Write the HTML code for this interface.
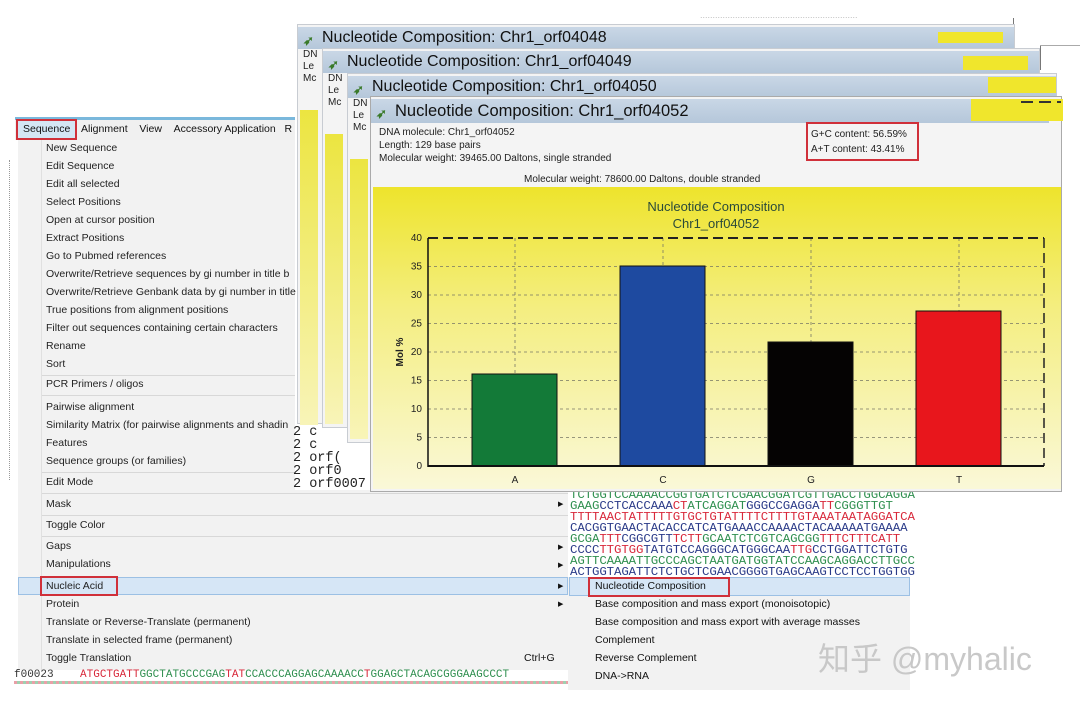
<!DOCTYPE html>
<html><head><meta charset="utf-8"><style>
*{margin:0;padding:0;box-sizing:border-box}
body{width:1080px;height:703px;background:#fff;position:relative;overflow:hidden;font-family:"Liberation Sans",sans-serif;color:#111}
.a{position:absolute}
.mi{position:absolute;left:46px;font-size:10.5px;color:#222;white-space:nowrap}
.win{position:absolute;background:#f4f4f4;border:1px solid #c8ccd2}
.tb{position:absolute;left:0;right:0;background:linear-gradient(#c9d7e6,#b5c7da);font-size:16px;color:#111;white-space:nowrap;padding-left:24px}
.ico{position:absolute;left:5px;top:3px;color:#3a7a2a;font-size:13px;font-weight:bold}
.sm{font-size:10px;color:#222;position:absolute;white-space:nowrap}
.seq{position:absolute;left:570px;font-family:"Liberation Mono",monospace;font-size:12.4px;line-height:11px;white-space:nowrap;letter-spacing:-0.1px}
.g{color:#2f8f4f}.r{color:#d8283a}.b{color:#2a3a88}
.sep{position:absolute;height:1px;background:#d8d8d8}
</style></head><body>

<div class="a" style="left:700px;top:10px;width:370px;height:8px;color:#bbb;font-size:9px;overflow:hidden;white-space:nowrap">...............................................................</div>
<div class="a" style="left:1013px;top:18px;width:1px;height:25px;background:#777"></div>
<div class="a" style="left:1040px;top:45px;width:1px;height:25px;background:#777"></div>
<div class="a" style="left:1040px;top:45px;width:40px;height:1px;background:#aaa"></div>

<!-- left menubar -->
<div class="a" style="left:15px;top:117px;width:280px;height:3px;background:#7ab8dc"></div>
<div class="a" style="left:15px;top:120px;width:280px;height:20px;background:#f0f0f0"></div>
<div class="a" style="left:16px;top:119px;width:61px;height:21px;border:2px solid #d0303a;background:#d4e6f4"></div>
<div class="a" style="left:23px;top:123px;font-size:10.5px">Sequence</div>
<div class="a" style="left:81px;top:123px;font-size:10.5px;white-space:nowrap">Alignment&nbsp;&nbsp;&nbsp;&nbsp;View&nbsp;&nbsp;&nbsp;&nbsp;Accessory Application&nbsp;&nbsp;&nbsp;R</div>
<div class="a" style="left:0;top:160px;width:10px;height:320px;border-right:1px dotted #999"></div>
<div class="a" style="left:18px;top:140px;width:277px;height:350px;background:#f2f2f2"></div>
<div class="a" style="left:41px;top:140px;width:1px;height:350px;background:#e0e0e0"></div>
<div class="mi" style="top:142px">New Sequence</div>
<div class="mi" style="top:160px">Edit Sequence</div>
<div class="mi" style="top:178px">Edit all selected</div>
<div class="mi" style="top:196px">Select Positions</div>
<div class="mi" style="top:214px">Open at cursor position</div>
<div class="mi" style="top:232px">Extract Positions</div>
<div class="mi" style="top:250px">Go to Pubmed references</div>
<div class="mi" style="top:268px;width:250px;overflow:hidden">Overwrite/Retrieve sequences by gi number in title b</div>
<div class="mi" style="top:286px;width:250px;overflow:hidden">Overwrite/Retrieve Genbank data by gi number in title</div>
<div class="mi" style="top:304px">True positions from alignment positions</div>
<div class="mi" style="top:322px">Filter out sequences containing certain characters</div>
<div class="mi" style="top:340px">Rename</div>
<div class="mi" style="top:358px">Sort</div>
<div class="sep" style="left:42px;top:375px;width:253px"></div>
<div class="mi" style="top:378px">PCR Primers / oligos</div>
<div class="sep" style="left:42px;top:395px;width:253px"></div>
<div class="mi" style="top:401px">Pairwise alignment</div>
<div class="mi" style="top:419px;width:250px;overflow:hidden">Similarity Matrix (for pairwise alignments and shadin</div>
<div class="mi" style="top:437px">Features</div>
<div class="mi" style="top:455px">Sequence groups (or families)</div>
<div class="sep" style="left:42px;top:472px;width:253px"></div>
<div class="mi" style="top:476px">Edit Mode</div>

<div class="a" style="left:18px;top:490px;width:550px;height:180px;background:#f2f2f2"></div>
<div class="a" style="left:41px;top:490px;width:1px;height:180px;background:#e0e0e0"></div>
<div class="sep" style="left:42px;top:493px;width:526px"></div>
<div class="mi" style="top:498px">Mask</div><div class="a" style="left:558px;top:500px;font-size:7px">▶</div>
<div class="sep" style="left:42px;top:515px;width:526px"></div>
<div class="mi" style="top:519px">Toggle Color</div>
<div class="sep" style="left:42px;top:536px;width:526px"></div>
<div class="mi" style="top:540px">Gaps</div><div class="a" style="left:558px;top:543px;font-size:7px">▶</div>
<div class="mi" style="top:558px">Manipulations</div><div class="a" style="left:558px;top:561px;font-size:7px">▶</div>
<div class="a" style="left:18px;top:577px;width:550px;height:18px;background:#d6e6f6;border:1px solid #9cc0e4"></div>
<div class="a" style="left:40px;top:576px;width:78px;height:20px;border:2px solid #d0303a"></div>
<div class="mi" style="top:580px">Nucleic Acid</div><div class="a" style="left:558px;top:582px;font-size:7px">▶</div>
<div class="mi" style="top:598px">Protein</div><div class="a" style="left:558px;top:600px;font-size:7px">▶</div>
<div class="mi" style="top:616px">Translate or Reverse-Translate (permanent)</div>
<div class="mi" style="top:634px">Translate in selected frame (permanent)</div>
<div class="mi" style="top:652px">Toggle Translation</div>
<div class="a" style="left:524px;top:652px;font-size:10.5px">Ctrl+G</div>
<div class="a" style="left:14px;top:669px;font-family:'Liberation Mono',monospace;font-size:11px;color:#333;white-space:nowrap">f00023&nbsp;&nbsp;&nbsp;&nbsp;<span class="r">ATGCTGATT</span><span class="g">GGCTATGCCCGAG</span><span class="r">TAT</span><span class="g">CCACCCAGGAGCAAAACC</span><span class="r">T</span><span class="g">GGAGCTACAGCGGGAAGCCCT</span></div>
<div class="a" style="left:14px;top:681px;width:555px;height:3px;background:repeating-linear-gradient(90deg,#e9a0a8 0 3px,#9fd0b0 3px 6px)"></div>

<!-- seq text column -->
<div class="a" style="left:293px;top:426px;font-family:'Liberation Mono',monospace;font-size:13.5px;line-height:13px;color:#222;white-space:pre">2 c
2 c
2 orf(
2 orf0
2 orf0007</div>

<div class="seq" style="top:490px">
<span class="g">TCTGGTCCAAAACCGGTGATCTCGAACGGATCGTTGACCTGGCAGGA</span><br>
<span class="g">GAAG</span><span class="b">CCTCACCAAA</span><span class="r">CT</span><span class="g">ATCAGGAT</span><span class="b">GGGCCGAGGA</span><span class="r">TT</span><span class="g">CGGGTTGT</span><br>
<span class="r">TTTTAACTATTTTTGTGCTGTATTTTCTTTTGTAAATAATAGGATCA</span><br>
<span class="b">CACGGTGAACTACACCATCATGAAACCAAAACTACAAAAATGAAAA</span><br>
<span class="g">GCGA</span><span class="r">TTT</span><span class="b">CGGCGTT</span><span class="r">TCTT</span><span class="g">GCAATCTCGTCAGCGG</span><span class="r">TTTCTTTCATT</span><br>
<span class="b">CCCC</span><span class="r">TTGTGG</span><span class="b">TATGTCCAGGGCATGGGCAA</span><span class="r">TTG</span><span class="b">CCTGGATTCTGTG</span><br>
<span class="g">AGTTCAAAATTGCCCAGCTAATGATGGTATCCAAGCAGGACCTTGCC</span><br>
<span class="b">ACTGGTAGATTCTCTGCTCGAACGGGGTGAGCAAGTCCTCCTGGTGG</span></div>

<!-- submenu -->
<div class="a" style="left:568px;top:577px;width:342px;height:113px;background:#f2f2f2"></div>
<div class="a" style="left:569px;top:577px;width:341px;height:19px;background:#d6e6f6;border:1px solid #9cc0e4"></div>
<div class="a" style="left:588px;top:577px;width:142px;height:20px;border:2px solid #d0303a"></div>
<div class="a" style="left:595px;top:580px;font-size:10.5px">Nucleotide Composition</div>
<div class="a" style="left:595px;top:598px;font-size:10.5px">Base composition and mass export (monoisotopic)</div>
<div class="a" style="left:595px;top:616px;font-size:10.5px">Base composition and mass export with average masses</div>
<div class="a" style="left:595px;top:634px;font-size:10.5px">Complement</div>
<div class="a" style="left:595px;top:652px;font-size:10.5px">Reverse Complement</div>
<div class="a" style="left:595px;top:670px;font-size:10.5px">DNA-&gt;RNA</div>

<!-- windows -->
<div class="win" style="left:297px;top:24px;width:718px;height:400px">
<div class="tb" style="top:2px;height:22px;line-height:22px"><span class="ico">➶</span>Nucleotide Composition: Chr1_orf04048</div>
<div class="a" style="left:640px;top:7px;width:65px;height:11px;background:#f0e62c"></div>
<div class="sm" style="left:5px;top:24px;line-height:12px">DN<br>Le<br>Mc</div>
<div class="a" style="left:2px;top:85px;width:18px;height:315px;background:linear-gradient(#ece540,#f8f4b8)"></div>
</div>
<div class="win" style="left:322px;top:48px;width:718px;height:380px">
<div class="tb" style="top:2px;height:22px;line-height:22px"><span class="ico">➶</span>Nucleotide Composition: Chr1_orf04049</div>
<div class="a" style="left:640px;top:7px;width:65px;height:14px;background:#f0e62c"></div>
<div class="sm" style="left:5px;top:24px;line-height:12px">DN<br>Le<br>Mc</div>
<div class="a" style="left:2px;top:85px;width:18px;height:290px;background:linear-gradient(#ece540,#f8f4b8)"></div>
</div>
<div class="win" style="left:347px;top:73px;width:710px;height:370px">
<div class="tb" style="top:2px;height:22px;line-height:22px"><span class="ico">➶</span>Nucleotide Composition: Chr1_orf04050</div>
<div class="a" style="left:640px;top:3px;width:68px;height:16px;background:#f0e62c"></div>
<div class="sm" style="left:5px;top:24px;line-height:12px">DN<br>Le<br>Mc</div>
<div class="a" style="left:2px;top:85px;width:18px;height:280px;background:linear-gradient(#ece540,#f8f4b8)"></div>
</div>

<div class="win" style="left:370px;top:96px;width:692px;height:396px;background:#f4f4f4;border-color:#aaa">
<div class="tb" style="top:2px;height:24px;line-height:24px;right:12px;font-size:16.5px"><span class="ico">➶</span>Nucleotide Composition: Chr1_orf04052</div>
<div class="a" style="left:600px;top:2px;width:92px;height:22px;background:#f0e62c"></div>
<div class="a" style="left:650px;top:4px;width:40px;height:2px;background:repeating-linear-gradient(90deg,#333 0 12px,transparent 12px 18px)"></div>
<div class="sm" style="left:8px;top:29px;line-height:13px;font-size:10px">DNA molecule: Chr1_orf04052<br>Length: 129 base pairs<br>Molecular weight: 39465.00 Daltons, single stranded</div>
<div class="a" style="left:435px;top:25px;width:113px;height:39px;border:2px solid #d0303a"></div>
<div class="sm" style="left:440px;top:30px;line-height:15px">G+C content: 56.59%<br>A+T content: 43.41%</div>
<div class="sm" style="left:153px;top:77px">Molecular weight: 78600.00 Daltons, double stranded</div>
<div class="a" style="left:2px;top:90px;width:688px;height:302px;background:linear-gradient(#eee42c 0%,#f4ee80 40%,#faf8d8 100%)"></div>
</div>

<!-- chart -->
<svg class="a" style="left:372px;top:186px" width="690" height="305">
<text x="344" y="25" text-anchor="middle" font-family="Liberation Sans" font-size="13" fill="#2a4a3a">Nucleotide Composition</text>
<text x="344" y="42" text-anchor="middle" font-family="Liberation Sans" font-size="13" fill="#2a4a3a">Chr1_orf04052</text>
<g stroke="#776" stroke-dasharray="3,3" stroke-width="0.8">
<line x1="56" x2="672" y1="80.5" y2="80.5"/><line x1="56" x2="672" y1="109" y2="109"/><line x1="56" x2="672" y1="137.5" y2="137.5"/><line x1="56" x2="672" y1="166" y2="166"/><line x1="56" x2="672" y1="194.5" y2="194.5"/><line x1="56" x2="672" y1="223" y2="223"/><line x1="56" x2="672" y1="251.5" y2="251.5"/>
<line x1="143" x2="143" y1="52" y2="280"/><line x1="291" x2="291" y1="52" y2="280"/><line x1="439" x2="439" y1="52" y2="280"/><line x1="587" x2="587" y1="52" y2="280"/>
</g>
<rect x="100" y="188" width="85" height="92" fill="#137a38" stroke="#111"/>
<rect x="248" y="80" width="85" height="200" fill="#1e4aa0" stroke="#111"/>
<rect x="396" y="156" width="85" height="124" fill="#050303" stroke="#111"/>
<rect x="544" y="125" width="85" height="155" fill="#e8161c" stroke="#111"/>
<line x1="56" x2="672" y1="52" y2="52" stroke="#222" stroke-width="2" stroke-dasharray="10,5"/>
<line x1="672" x2="672" y1="52" y2="280" stroke="#222" stroke-width="1.5" stroke-dasharray="10,5"/>
<line x1="56" x2="56" y1="52" y2="281" stroke="#111" stroke-width="1.5"/>
<line x1="56" x2="672" y1="280" y2="280" stroke="#111" stroke-width="2"/>
<g font-family="Liberation Sans" font-size="10" fill="#222" text-anchor="end">
<text x="50" y="55">40</text><text x="50" y="83.5">35</text><text x="50" y="112">30</text><text x="50" y="140.5">25</text><text x="50" y="169">20</text><text x="50" y="197.5">15</text><text x="50" y="226">10</text><text x="50" y="254.5">5</text><text x="50" y="283">0</text>
</g>
<g font-family="Liberation Sans" font-size="10" fill="#222" text-anchor="middle">
<text x="143" y="297">A</text><text x="291" y="297">C</text><text x="439" y="297">G</text><text x="587" y="297">T</text>
</g>
<text transform="translate(31,166) rotate(-90)" text-anchor="middle" font-family="Liberation Sans" font-size="10" font-weight="bold" fill="#222">Mol %</text>
</svg>

<div class="a" style="left:818px;top:634px;font-family:'Liberation Sans','Noto Sans CJK SC',sans-serif;font-size:32px;color:#c8c8c8;white-space:nowrap">知乎 @myhalic</div>
</body></html>
